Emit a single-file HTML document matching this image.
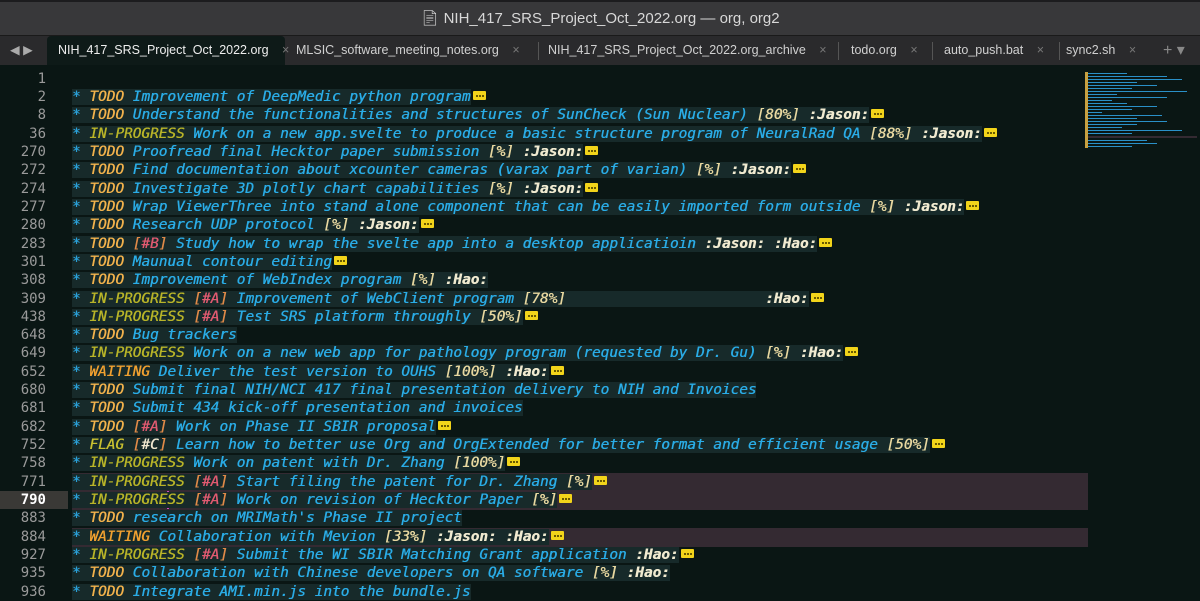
<!DOCTYPE html>
<html><head><meta charset="utf-8"><style>
*{margin:0;padding:0;box-sizing:border-box}
body{width:1200px;height:600px;overflow:hidden;background:#0a1614;position:relative;font-family:"DejaVu Sans Mono","Liberation Mono",monospace}
#title{position:absolute;left:0;top:0;width:1200px;height:36px;background:#38383a;border-top:2px solid #1c1c1e;border-bottom:1px solid #1a1a1a;color:#d8d8d8;font:15px "Liberation Sans",sans-serif;text-align:center;line-height:33px}
#tabs{position:absolute;left:0;top:36px;width:1200px;height:29px;background:#2a2a2c;font:12.5px "Liberation Sans",sans-serif;color:#d0d0d0}
.tab{position:absolute;top:0;height:29px;line-height:29px;white-space:nowrap}
.x{color:#777;margin-left:10px}
.sep{position:absolute;top:6px;width:1px;height:18px;background:#555}
.ln{position:absolute;left:0;width:46px;text-align:right;color:#9a9a9a;font-size:14px;font-family:"DejaVu Sans Mono",monospace}
.row{position:absolute;left:72px;font-size:14.4px;font-style:italic;white-space:pre;line-height:18.3px;height:18.3px;text-shadow:0.4px 0 currentColor}
.row span.b{background:#172a2a}
.s{color:#2aa0d8}.t{color:#f2b24c}.ip{color:#b8b428}.w{color:#f0a030}.f{color:#c8c030}
.bl{color:#2aace6}.br{color:#e08a48}.pa{color:#e05a70}.pc{color:#f0e8d0}.pct{color:#e8d8a0}.tag{color:#f0ead0;font-weight:bold}
.d{display:inline-block;width:13px;height:9px;background:#f2d41a;border-radius:1px;vertical-align:1px;margin-left:2px;position:relative}
.d:after{content:"";position:absolute;left:3px;top:4px;width:2px;height:2px;background:#6a5a00;box-shadow:3px 0 #6a5a00,6px 0 #6a5a00}
.hl{position:absolute;left:72px;width:1016px;background:#342a32}
</style></head><body>
<div id="title">&#128196;&#xFE0E; NIH_417_SRS_Project_Oct_2022.org — org, org2</div>
<div id="tabs">
<div class="tab" style="left:10px;color:#aaa">◀ ▶</div>
<div class="tab" style="left:47px;width:238px;background:#0e1a18;padding-left:11px;color:#eee;border-radius:4px 4px 0 0">NIH_417_SRS_Project_Oct_2022.org <span class="x">×</span></div>
<div class="tab" style="left:296px">MLSIC_software_meeting_notes.org <span class="x">×</span></div>
<div class="sep" style="left:538px"></div>
<div class="tab" style="left:548px">NIH_417_SRS_Project_Oct_2022.org_archive <span class="x">×</span></div>
<div class="sep" style="left:838px"></div>
<div class="tab" style="left:851px">todo.org <span class="x">×</span></div>
<div class="sep" style="left:932px"></div>
<div class="tab" style="left:944px">auto_push.bat <span class="x">×</span></div>
<div class="sep" style="left:1059px"></div>
<div class="tab" style="left:1066px">sync2.sh <span class="x">×</span></div>
<div class="tab" style="left:1163px;color:#888;font-size:16px">+ ▾</div>
</div>
<div class="hl" style="top:473px;height:37px"></div>
<div class="hl" style="top:528px;height:19px"></div>
<div style="position:absolute;left:0;top:491px;width:68px;height:18.3px;background:#3a3936"></div>
<div style="position:absolute;left:167px;top:491px;width:2px;height:18px;background:#d04ac0"></div>
<svg style="position:absolute;left:1085px;top:70px" width="112" height="80">
<g fill="#2a90c8"><rect x="2" y="3" width="40" height="1"/><rect x="2" y="6" width="80" height="1"/><rect x="2" y="9" width="95" height="1"/><rect x="2" y="12" width="50" height="1"/><rect x="2" y="15" width="70" height="1"/><rect x="2" y="18" width="45" height="1"/><rect x="2" y="21" width="100" height="1"/><rect x="2" y="24" width="30" height="1"/><rect x="2" y="27" width="80" height="1"/><rect x="2" y="30" width="25" height="1"/><rect x="2" y="33" width="40" height="1"/><rect x="2" y="36" width="70" height="1"/><rect x="2" y="39" width="45" height="1"/><rect x="2" y="42" width="15" height="1"/><rect x="2" y="45" width="75" height="1"/><rect x="2" y="48" width="50" height="1"/><rect x="2" y="51" width="80" height="1"/><rect x="2" y="54" width="50" height="1"/><rect x="2" y="57" width="35" height="1"/><rect x="2" y="60" width="95" height="1"/><rect x="2" y="63" width="45" height="1"/><rect x="2" y="66" width="110" height="2" fill="#342a32"/><rect x="2" y="70" width="60" height="1"/><rect x="2" y="73" width="70" height="1"/><rect x="2" y="76" width="45" height="1"/></g>
<g fill="#c8a040"><rect x="0" y="2" width="3" height="76"/></g>
</svg>
<div id="c"></div>
<script>
const L=[
["1",""],
["2",'<span class="b"><span class="s">* </span><span class="t">TODO</span> <span class="bl">Improvement of DeepMedic python program</span></span><i class="d"></i>'],
["8",'<span class="b"><span class="s">* </span><span class="t">TODO</span> <span class="bl">Understand the functionalities and structures of SunCheck (Sun Nuclear)</span> <span class="pct">[80%]</span> <span class="tag">:Jason:</span></span><i class="d"></i>'],
["36",'<span class="b"><span class="s">* </span><span class="ip">IN-PROGRESS</span> <span class="bl">Work on a new app.svelte to produce a basic structure program of NeuralRad QA</span> <span class="pct">[88%]</span> <span class="tag">:Jason:</span></span><i class="d"></i>'],
["270",'<span class="b"><span class="s">* </span><span class="t">TODO</span> <span class="bl">Proofread final Hecktor paper submission</span> <span class="pct">[%]</span> <span class="tag">:Jason:</span></span><i class="d"></i>'],
["272",'<span class="b"><span class="s">* </span><span class="t">TODO</span> <span class="bl">Find documentation about xcounter cameras (varax part of varian)</span> <span class="pct">[%]</span> <span class="tag">:Jason:</span></span><i class="d"></i>'],
["274",'<span class="b"><span class="s">* </span><span class="t">TODO</span> <span class="bl">Investigate 3D plotly chart capabilities</span> <span class="pct">[%]</span> <span class="tag">:Jason:</span></span><i class="d"></i>'],
["277",'<span class="b"><span class="s">* </span><span class="t">TODO</span> <span class="bl">Wrap ViewerThree into stand alone component that can be easily imported form outside</span> <span class="pct">[%]</span> <span class="tag">:Jason:</span></span><i class="d"></i>'],
["280",'<span class="b"><span class="s">* </span><span class="t">TODO</span> <span class="bl">Research UDP protocol</span> <span class="pct">[%]</span> <span class="tag">:Jason:</span></span><i class="d"></i>'],
["283",'<span class="b"><span class="s">* </span><span class="t">TODO</span> <span class="br">[</span><span class="pa">#B</span><span class="br">]</span> <span class="bl">Study how to wrap the svelte app into a desktop applicatioin</span> <span class="tag">:Jason: :Hao:</span></span><i class="d"></i>'],
["301",'<span class="b"><span class="s">* </span><span class="t">TODO</span> <span class="bl">Maunual contour editing</span></span><i class="d"></i>'],
["308",'<span class="b"><span class="s">* </span><span class="t">TODO</span> <span class="bl">Improvement of WebIndex program</span> <span class="pct">[%]</span> <span class="tag">:Hao:</span></span>'],
["309",'<span class="b"><span class="s">* </span><span class="ip">IN-PROGRESS</span> <span class="br">[</span><span class="pa">#A</span><span class="br">]</span> <span class="bl">Improvement of WebClient program</span> <span class="pct">[78%]</span>                       <span class="tag">:Hao:</span></span><i class="d"></i>'],
["438",'<span class="b"><span class="s">* </span><span class="ip">IN-PROGRESS</span> <span class="br">[</span><span class="pa">#A</span><span class="br">]</span> <span class="bl">Test SRS platform throughly</span> <span class="pct">[50%]</span></span><i class="d"></i>'],
["648",'<span class="b"><span class="s">* </span><span class="t">TODO</span> <span class="bl">Bug trackers</span></span>'],
["649",'<span class="b"><span class="s">* </span><span class="ip">IN-PROGRESS</span> <span class="bl">Work on a new web app for pathology program (requested by Dr. Gu)</span> <span class="pct">[%]</span> <span class="tag">:Hao:</span></span><i class="d"></i>'],
["652",'<span class="b"><span class="s">* </span><span class="w">WAITING</span> <span class="bl">Deliver the test version to OUHS</span> <span class="pct">[100%]</span> <span class="tag">:Hao:</span></span><i class="d"></i>'],
["680",'<span class="b"><span class="s">* </span><span class="t">TODO</span> <span class="bl">Submit final NIH/NCI 417 final presentation delivery to NIH and Invoices</span></span>'],
["681",'<span class="b"><span class="s">* </span><span class="t">TODO</span> <span class="bl">Submit 434 kick-off presentation and invoices</span></span>'],
["682",'<span class="b"><span class="s">* </span><span class="t">TODO</span> <span class="br">[</span><span class="pa">#A</span><span class="br">]</span> <span class="bl">Work on Phase II SBIR proposal</span></span><i class="d"></i>'],
["752",'<span class="b"><span class="s">* </span><span class="f">FLAG</span> <span class="br">[</span><span class="pc">#C</span><span class="br">]</span> <span class="bl">Learn how to better use Org and OrgExtended for better format and efficient usage</span> <span class="pct">[50%]</span></span><i class="d"></i>'],
["758",'<span class="b"><span class="s">* </span><span class="ip">IN-PROGRESS</span> <span class="bl">Work on patent with Dr. Zhang</span> <span class="pct">[100%]</span></span><i class="d"></i>'],
["771",'<span class="b"><span class="s">* </span><span class="ip">IN-PROGRESS</span> <span class="br">[</span><span class="pa">#A</span><span class="br">]</span> <span class="bl">Start filing the patent for Dr. Zhang</span> <span class="pct">[%]</span></span><i class="d"></i>'],
["790",'<span class="b"><span class="s">* </span><span class="ip">IN-PROGRESS</span> <span class="br">[</span><span class="pa">#A</span><span class="br">]</span> <span class="bl">Work on revision of Hecktor Paper</span> <span class="pct">[%]</span></span><i class="d"></i>'],
["883",'<span class="b"><span class="s">* </span><span class="t">TODO</span> <span class="bl">research on MRIMath\'s Phase II project</span></span>'],
["884",'<span class="b"><span class="s">* </span><span class="w">WAITING</span> <span class="bl">Collaboration with Mevion</span> <span class="pct">[33%]</span> <span class="tag">:Jason: :Hao:</span></span><i class="d"></i>'],
["927",'<span class="b"><span class="s">* </span><span class="ip">IN-PROGRESS</span> <span class="br">[</span><span class="pa">#A</span><span class="br">]</span> <span class="bl">Submit the WI SBIR Matching Grant application</span> <span class="tag">:Hao:</span></span><i class="d"></i>'],
["935",'<span class="b"><span class="s">* </span><span class="t">TODO</span> <span class="bl">Collaboration with Chinese developers on QA software</span> <span class="pct">[%]</span> <span class="tag">:Hao:</span></span>'],
["936",'<span class="b"><span class="s">* </span><span class="t">TODO</span> <span class="bl">Integrate AMI.min.js into the bundle.js</span></span>']
];
let h="";
L.forEach((l,i)=>{const y=(69.5+i*18.33).toFixed(1);
const st=l[0]=="790"?"color:#fff;font-weight:bold;":"";
h+=`<div class="ln" style="top:${y}px;line-height:18.3px;${st}">${l[0]}</div><div class="row" style="top:${y}px">${l[1]}</div>`;});
document.getElementById("c").innerHTML=h;
</script>
</body></html>
